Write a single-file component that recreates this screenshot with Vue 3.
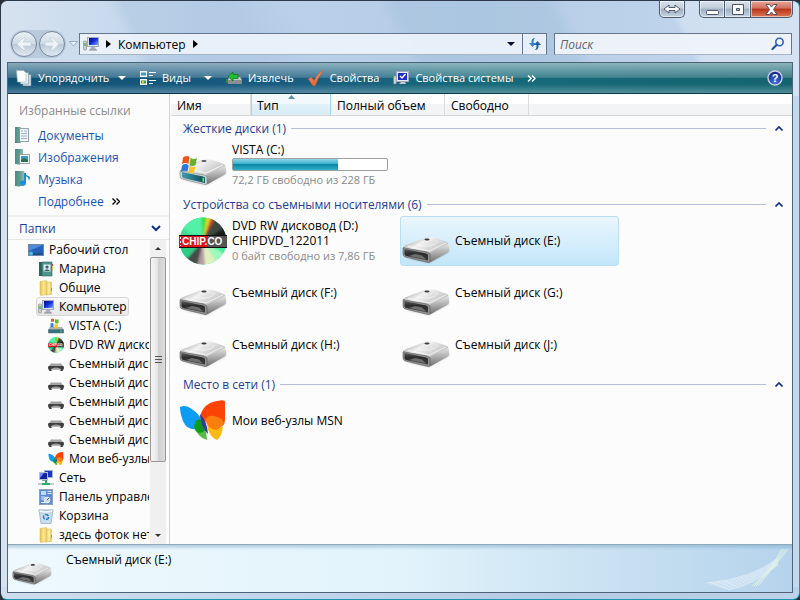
<template>
  <div class="window">
    <!-- shared icon shapes -->
    <svg class="icon-defs" aria-hidden="true">
      <defs>
        <linearGradient id="gTop" x1="0" y1="0" x2="1" y2="0.6">
          <stop offset="0" stop-color="#8a8a8a" />
          <stop offset="0.45" stop-color="#f1f1f1" />
          <stop offset="1" stop-color="#bcbcbc" />
        </linearGradient>
        <linearGradient id="gSide" x1="0" y1="0" x2="0" y2="1">
          <stop offset="0" stop-color="#e4e4e4" />
          <stop offset="1" stop-color="#707070" />
        </linearGradient>
        <linearGradient id="gCavity" x1="0" y1="0" x2="0" y2="1">
          <stop offset="0" stop-color="#5a5a5a" />
          <stop offset="0.4" stop-color="#2c2c2c" />
          <stop offset="1" stop-color="#3c3c3c" />
        </linearGradient>
        <linearGradient id="gTeal" x1="0" y1="0" x2="1" y2="0">
          <stop offset="0" stop-color="#3f9db0" />
          <stop offset="1" stop-color="#0f4a58" />
        </linearGradient>
        <linearGradient id="gScreen" x1="0" y1="0" x2="1" y2="1">
          <stop offset="0" stop-color="#000c8c" />
          <stop offset="0.5" stop-color="#1430d8" />
          <stop offset="1" stop-color="#7fa6ff" />
        </linearGradient>
        <linearGradient id="gFolder" x1="0" y1="0" x2="1" y2="0">
          <stop offset="0" stop-color="#e0bd50" />
          <stop offset="0.5" stop-color="#fbe893" />
          <stop offset="1" stop-color="#e8c95e" />
        </linearGradient>
        <linearGradient id="gGreenBook" x1="0" y1="0" x2="1" y2="0">
          <stop offset="0" stop-color="#2f6f68" />
          <stop offset="1" stop-color="#8fc0ae" />
        </linearGradient>
        <linearGradient id="gCheck" x1="0" y1="0" x2="0" y2="1">
          <stop offset="0" stop-color="#ff9a6b" />
          <stop offset="1" stop-color="#e9622c" />
        </linearGradient>
        <radialGradient id="gHelp" cx="0.5" cy="0.8" r="0.8">
          <stop offset="0" stop-color="#4a74e8" />
          <stop offset="1" stop-color="#0b1c80" />
        </radialGradient>
        <filter id="soft"><feGaussianBlur stdDeviation="1.2" /></filter>
        <clipPath id="discClip"><circle cx="24" cy="24" r="23.500" /></clipPath>
      </defs>

      <symbol id="drive" viewBox="0 1 48 48">
        <path d="M4 42l23 5 20-11v-4L26 41z" fill="#000" opacity="0.2" filter="url(#soft)" />
        <path d="M1 32Q1 30 4 29L20 23Q27 20 34 22L45 26Q47 27 46 29L27 38z" fill="url(#gTop)" />
        <path d="M27 37L46 28Q47 28 47 30V34Q47 36 45 37L29 46Q27 47 27 45z" fill="url(#gSide)" />
        <path d="M1 32Q1 31 3 32L25 36Q28 37 28 39V45Q28 47 26 46.500L3 41Q1 40 1 38z" fill="#8f8f8f" stroke="#5c5c5c" stroke-width="0.600" />
        <path d="M2.500 33L24 37.500Q26 38 26 39.500V44.500L4 40Q2.500 39 2.500 38z" fill="url(#gCavity)" />
        <path d="M7 40L13 38L20 39.500L24 43.500z" fill="#6e6e6e" />
        <path d="M6 30L27 35L44 27" fill="none" stroke="#f8f8f8" stroke-width="0.800" />
        <path d="M15 29Q30 33 36 25" fill="none" stroke="#fff" stroke-width="0.700" opacity="0.800" />
        <ellipse cx="25" cy="23.500" rx="2.600" ry="1.100" fill="#3c3c3c" />
      </symbol>

      <symbol id="systemDrive" viewBox="0 1 48 48">
        <path d="M4 40l23 5 20-11v-4L26 39z" fill="#000" opacity="0.200" filter="url(#soft)" />
        <path d="M1 31Q1 29 4 28L20 21Q27 18 34 20L45 24Q47 25 46 27L27 36z" fill="url(#gTop)" />
        <path d="M27 35L46 26Q47 26 47 28V32Q47 34 45 35L29 44Q27 45 27 43z" fill="url(#gSide)" />
        <path d="M1 31Q1 30 3 31L25 35Q28 36 28 37V43Q28 45 26 44.500L3 39Q1 38 1 36z" fill="#c9d2d4" stroke="#7d8688" stroke-width="0.600" />
        <path d="M3 32L24 36.500Q26 37 26 38V43L4 38Q3 37 3 36z" fill="url(#gTeal)" />
        <path d="M23.500 37.500l1.600.4v4l-1.600-.4z" fill="#5dff3c" />
        <path d="M12 29L27 33L44 25" fill="none" stroke="#fff" stroke-width="0.800" />
        <ellipse cx="25" cy="21" rx="2.600" ry="1" fill="#555" />
        <path d="M4 17.500q4-2.500 6.500-.5l-1 7q-3-2-6.500 0z" fill="#e85a1c" />
        <path d="M11.500 18q3.500 2 6.500 0l-1.500 7q-3 2-6 0z" fill="#6bae2c" />
        <path d="M3 25.500q3.500-2.500 6.500-.5l-1 6.500q-3-1.500-6.500.5z" fill="#2c78d8" />
        <path d="M10.500 26q3 2 6 .5l-1.500 6q-3 1.500-5.500 0z" fill="#f8c423" />
      </symbol>

      <symbol id="disc" viewBox="0 0 48 48">
        <g clip-path="url(#discClip)">
          <rect width="48" height="48" fill="#3fdc92" />
          <g filter="url(#soft)">
            <path d="M24 24L-2 8V-2h28z" fill="#52f0a8" />
            <path d="M24 24L22-2H30z" fill="#3ee040" />
            <path d="M24 24L28-2H34z" fill="#e4d02c" />
            <path d="M24 24L33-2H39z" fill="#c04a28" />
            <path d="M24 24L38-2H50V14z" fill="#3c4640" />
            <path d="M24 24L50 8V22z" fill="#151c18" />
            <path d="M24 24L50 26V44z" fill="#3df09c" />
            <path d="M24 24L50 40L36 50z" fill="#a0f8bc" />
            <path d="M24 24L40 50H24z" fill="#e0f0c0" />
            <path d="M24 24L26 50H16z" fill="#b49aa0" />
            <path d="M24 24L18 50H-2V40z" fill="#474b49" />
            <path d="M24 24L6 44L-2 30z" fill="#2ecb83" />
          </g>
        </g>
        <rect x="0" y="19" width="29" height="11" fill="#e0121c" />
        <rect x="29" y="19" width="19" height="11" fill="#555" />
        <path d="M0 18.500H48M0 30.500H48" stroke="#111" stroke-width="1" />
        <path d="M1.500 20v2M1.500 24v2M1.500 28v1" stroke="#fff" stroke-width="1" />
        <text x="3" y="28" font-family="Liberation Sans, sans-serif" font-weight="bold" font-size="10" fill="#fff">CHIP.CO</text>
      </symbol>

      <symbol id="butterfly" viewBox="0 0 48 48">
        <path d="M1 10Q7 7 14 13Q20 17 22 22L19 32Q8 34 4 24Q1 16 1 10z" fill="#0d9cf4" />
        <path d="M21 20Q24 6 38 4Q46 2 46 5V22Q46 31 38 30L25 24z" fill="#fb4306" />
        <path d="M28 28L44 30Q43 39 38 43Q30 40 28 28z" fill="#fdb913" />
        <path d="M26 23Q28 18 35 19Q44 21 45 26Q42 31 37 33Q29 32 26 23z" fill="#fb7d0e" />
        <path d="M15 29Q20 31 27 35L28 43Q18 40 15 29z" fill="#58b947" />
        <path d="M15 30Q17 20 22 23L26 34Q18 39 15 30z" fill="#0c9a1c" />
        <path d="M21 17Q28 24 29 37Q22 31 21 17z" fill="#2c3d9c" />
      </symbol>

      <symbol id="computer" viewBox="0 0 16 16">
        <rect x="0.500" y="5" width="3" height="9" rx="1" fill="#c9cfcf" stroke="#7b8787" stroke-width="0.600" />
        <path d="M2 7v3" stroke="#1fa32a" stroke-width="1" />
        <rect x="4.500" y="1.500" width="11" height="9" fill="#dfe3ea" stroke="#a3abb9" />
        <rect x="6" y="2" width="9" height="7" fill="url(#gScreen)" />
        <path d="M8 11h4l1 3H7z" fill="#a9b0ba" />
        <path d="M6 14h8" stroke="#868e99" />
      </symbol>

      <symbol id="systemProps" viewBox="0 0 16 16">
        <rect x="0.500" y="6" width="3" height="8" rx="1" fill="#c9cfcf" stroke="#7b8787" stroke-width="0.600" />
        <rect x="3.500" y="1.500" width="12" height="10" fill="#e8ebf0" stroke="#a2abba" />
        <rect x="5" y="3" width="9" height="7" fill="#1c2fc4" />
        <path d="M7 6l2 2 3.500-4" fill="none" stroke="#fff" stroke-width="1.500" />
        <path d="M8 12h4l1 2H6z" fill="#c3c8d0" />
      </symbol>

      <symbol id="desktop" viewBox="0 0 16 16">
        <rect x="0.500" y="2.500" width="15" height="11" fill="#2460b8" stroke="#6d86a8" />
        <path d="M1 3h14L1 9z" fill="#4f8cd8" />
        <rect x="1" y="11" width="14" height="2" fill="#1e4f86" />
        <circle cx="3" cy="11.500" r="2" fill="#4bb8e8" />
      </symbol>

      <symbol id="user" viewBox="0 0 16 16">
        <path d="M1 1h3v14H1z" fill="#2b6660" />
        <path d="M4 1h10v14H4z" fill="#4e9488" stroke="#2b6660" stroke-width="0.600" />
        <rect x="5.500" y="3.500" width="7" height="7" fill="#dcebf2" />
        <circle cx="9" cy="6" r="1.600" fill="#3c5a70" />
        <path d="M6 10q3-3.500 6 0z" fill="#3c5a70" />
        <path d="M14.500 3v2" stroke="#d84a34" />
        <path d="M14.500 6v3" stroke="#e4c23c" />
      </symbol>

      <symbol id="folder" viewBox="0 0 16 16">
        <path d="M7 2h6.500v12.500L7 15z" fill="#f0d36a" stroke="#d8ba5c" stroke-width="0.500" />
        <path d="M2 1.500L8 0.500Q9 1 9 2V14.500L3 15.500Q2 15 2 14z" fill="url(#gFolder)" stroke="#d8ba5c" stroke-width="0.500" />
        <path d="M9.500 3l2.500-.5v11l-2.500 1z" fill="#fbeaa0" />
        <path d="M13.500 8v3" stroke="#57a4d8" />
      </symbol>

      <symbol id="smallDrive" viewBox="0 0 16 16">
        <path d="M3.500 7h9L16 11H0z" fill="#a4a4a4" />
        <path d="M4 7h8l1 1H3z" fill="#d0d0d0" />
        <path d="M1 10h14q1 0 1 1.500T14.500 15H1.500Q0 13 0 11.500T1 10z" fill="#3f3f3f" />
        <path d="M3 13.500q1-2 5-2t5 2z" fill="#9a9a9a" />
        <path d="M3 13.500h10L12 15H4z" fill="#fafafa" />
      </symbol>

      <symbol id="smallSystem" viewBox="0 0 16 16">
        <path d="M2 9h12l2 3v3H0v-3z" fill="#a9b3b8" />
        <path d="M0.500 11.500h15V15H0.500z" fill="#2d7183" stroke="#6d7b80" stroke-width="0.600" />
        <path d="M13 12.500v1.500" stroke="#6dff48" />
        <path d="M3 1q2-1 3 0v3q-1-1-3 0z" fill="#ee5a22" />
        <path d="M7 1q2 1 3.500 0v4q-2 1-3.500 0z" fill="#6bb52c" />
        <path d="M2.500 5.500q2-1 3 0v4q-1-1-3 0z" fill="#2c7fe0" />
        <path d="M6.500 6q2 1 3.500 0v4q-2 1-3.500 0z" fill="#f8c423" />
      </symbol>

      <symbol id="network" viewBox="0 0 16 16">
        <rect x="6.500" y="0.500" width="8" height="7" fill="#1c36c8" stroke="#a9b2cc" />
        <rect x="1.500" y="2.500" width="8" height="7" fill="#1024a4" stroke="#b6bed4" />
        <path d="M2 3h4L2 8z" fill="#6d8cf0" />
        <path d="M4 10h4v1H4z" fill="#9098a8" />
        <path d="M8 10v4M0 14h16" stroke="#27b06c" stroke-width="2" />
        <path d="M0 14h4M12 14h4" stroke="#c4c9cc" stroke-width="2" />
      </symbol>

      <symbol id="control" viewBox="0 0 16 16">
        <rect x="1.500" y="0.500" width="13" height="15" fill="#5c8dd6" stroke="#8fa0b8" />
        <path d="M3 2h5v4H3z" fill="#bcd8f8" />
        <path d="M9.500 2.500h4M9.500 4.500h4M3 8h4M3 10h3" stroke="#d9ecff" />
        <circle cx="9" cy="11" r="3" fill="#cfdcea" stroke="#fff" stroke-width="0.600" />
        <path d="M9 11l2-2" stroke="#3d5f94" />
        <path d="M3 13.500h4" stroke="#eef5ff" />
      </symbol>

      <symbol id="bin" viewBox="0 0 16 16">
        <path d="M1 2h14l-2 13.500H3z" fill="#c9def0" stroke="#8ba5bc" stroke-width="0.700" />
        <path d="M1 1.500q7 2.500 14 0l-.5 3q-6 2-13 0z" fill="#eef5fb" stroke="#94abc0" stroke-width="0.500" />
        <circle cx="8" cy="9" r="2.500" fill="none" stroke="#2c7cd8" stroke-width="1.500" stroke-dasharray="4 1.200" />
      </symbol>

      <symbol id="documents" viewBox="0 0 16 18">
        <path d="M1 1h6v16H1z" fill="url(#gGreenBook)" />
        <rect x="5.500" y="2.500" width="9" height="13" fill="#f2f6f8" stroke="#98a4ac" />
        <path d="M7 5h2M10 5h3M7 7.500h6M7 10h6M7 12.500h6" stroke="#9aacc6" />
        <path d="M1 1l5 2v14l-5-1z" fill="#5b9d90" opacity="0.700" />
      </symbol>

      <symbol id="pictures" viewBox="0 0 16 18">
        <path d="M1 1h8v15H1z" fill="url(#gGreenBook)" />
        <rect x="5.500" y="6.500" width="10" height="9" fill="#f5f8fa" stroke="#98a4ac" />
        <rect x="7" y="8" width="7" height="6" fill="#3d9cc8" />
        <path d="M7 12l3-2 4 2v2H7z" fill="#2a6f50" />
        <path d="M1 1l5 2v14l-5-1z" fill="#5b9d90" opacity="0.700" />
      </symbol>

      <symbol id="music" viewBox="0 0 16 18">
        <path d="M1 1h9v15H1z" fill="url(#gGreenBook)" />
        <path d="M1 1l5 2v14l-5-1z" fill="#5b9d90" opacity="0.700" />
        <path d="M11 3v10" stroke="#0c7cc8" stroke-width="1.800" />
        <path d="M10.500 2q1 3 4 4t0 5q1-4-4-5z" fill="#1990dc" />
        <ellipse cx="9" cy="13" rx="3" ry="2.600" fill="#1d8fe0" />
      </symbol>

      <symbol id="organize" viewBox="0 0 16 16">
        <path d="M6 4.500h9V16H7z" fill="#d3dfe5" stroke="#6f8f9f" stroke-width="0.600" />
        <path d="M3.500 2.500h9V14h-8z" fill="#e8eff2" stroke="#6f8f9f" stroke-width="0.600" />
        <path d="M0.500 0.500h7l2.500 2.500v9h-8.500z" fill="#fff" stroke="#9fb3be" stroke-width="0.600" />
      </symbol>

      <symbol id="views" viewBox="0 0 16 16">
        <path d="M0 1h7v6H0zM0 9h7v6H0z" fill="#f4f8fa" />
        <path d="M1 2.500h5v3H1z" fill="#3e9cc0" />
        <path d="M1 10.500h5v3H1z" fill="#3e9a3c" />
        <path d="M2 11h2v2H2z" fill="#e0c43c" />
        <path d="M9 2.500h7M9 5.500h4M9 10.500h7M9 13.500h4" stroke="#fff" stroke-width="1" />
      </symbol>

      <symbol id="eject" viewBox="0 0 16 16">
        <path d="M3 7h11l2 3v4H2v-4z" fill="#c3c8cb" />
        <path d="M2 10h14v4H2z" fill="#878f92" />
        <path d="M0 9h2v4H0z" fill="#2a8c3c" />
        <path d="M2 6.500l5-4.500v2.500h5v4H7v2.500z" fill="#20c030" stroke="#0c7018" stroke-width="0.700" />
      </symbol>

      <symbol id="check" viewBox="0 0 16 16">
        <path d="M0.500 9l3-1.500L6 11Q9 4 15 0.500Q10 7 7 15.500H5z" fill="url(#gCheck)" stroke="#e0683a" stroke-width="0.800" />
      </symbol>
    </svg>

    <header class="chrome">
      <div class="caption">
        <button class="cap resize" aria-label="Изменить размер">
          <svg width="18" height="10" viewBox="0 0 18 10">
            <path d="M1 5l5-4v2.500h6V1l5 4-5 4V6.500H6V9z" fill="#fff" stroke="#555d68" />
          </svg>
        </button>
        <div class="cap-group">
          <button class="cap" aria-label="Свернуть">
            <svg width="13" height="11" viewBox="0 0 13 11"><rect x="0.500" y="6.500" width="12" height="4" rx="1" fill="#fff" stroke="#4c5664" /></svg>
          </button>
          <button class="cap" aria-label="Развернуть">
            <svg width="12" height="11" viewBox="0 0 12 11">
              <path d="M0.500 0.500h11v10H0.500zM4.500 4.500v2h3v-2z" fill="#fff" fill-rule="evenodd" stroke="#4c5664" />
            </svg>
          </button>
          <button class="cap close" aria-label="Закрыть">
            <svg width="13" height="11" viewBox="0 0 13 11">
              <path d="M1 0.500h3.500l2 2.500 2-2.500H12L8.500 5.500l3.500 5H8.500l-2-2.500-2 2.500H1l3.500-5z" fill="#fff" stroke="#56525e" />
            </svg>
          </button>
        </div>
      </div>

      <div class="nav-row">
        <div class="history">
          <button class="round" aria-label="Назад">
            <svg width="16" height="14" viewBox="0 0 16 14"><path d="M1 7l6-6h3L7 5h8v4H7l3 4H7z" fill="#edf3f8" stroke="#c3ced8" stroke-width="0.700" /></svg>
          </button>
          <button class="round" aria-label="Вперед">
            <svg width="16" height="14" viewBox="0 0 16 14"><path d="M15 7L9 1H6l3 4H1v4h8l-3 4h3z" fill="#edf3f8" stroke="#c3ced8" stroke-width="0.700" /></svg>
          </button>
        </div>
        <button class="plain" aria-label="Последние страницы">
          <svg width="9" height="6" viewBox="0 0 9 6"><path d="M0.500 0.500h8L4.500 5z" fill="#eaf1f8" stroke="#8a9db3" stroke-width="0.800" /></svg>
        </button>
        <nav class="address">
          <svg class="i16"><use href="#computer" /></svg>
          <svg width="5" height="8" viewBox="0 0 5 8"><path d="M0 0l5 4-5 4z" /></svg>
          <a href="#" class="crumb">Компьютер</a>
          <svg width="5" height="8" viewBox="0 0 5 8"><path d="M0 0l5 4-5 4z" /></svg>
          <button class="plain drop" aria-label="Предыдущие расположения">
            <svg width="8" height="4" viewBox="0 0 8 4"><path d="M0 0h8L4 4z" fill="#0b0b3c" /></svg>
          </button>
          <button class="plain refresh" aria-label="Обновить">
            <svg width="14" height="14" viewBox="0 0 14 14">
              <path d="M7 1Q3 1 3.500 6H1l3.500 4L8 6H5.500Q5 3 7 1z" fill="#2f86cc" />
              <path d="M7 13q4 0 3.500-5H13L9.500 4 6 8h2.500Q9 11 7 13z" fill="#1f5fa4" />
            </svg>
          </button>
        </nav>
        <label class="search">
          <input type="text" placeholder="Поиск" aria-label="Поиск" />
          <svg width="14" height="14" viewBox="0 0 14 14">
            <circle cx="8.500" cy="5" r="3.700" fill="#eef6ff" stroke="#2f62b4" stroke-width="1.600" />
            <path d="M5.500 8L1.500 12" stroke="#24519e" stroke-width="2.200" stroke-linecap="round" />
          </svg>
        </label>
      </div>
    </header>

    <div class="client">
      <div class="toolbar">
        <button v-for="tool in tools" :key="tool.label" class="tool" :class="{ menu: tool.menu }">
          <svg class="i16"><use :href="'#' + tool.icon" /></svg>
          <span>{{ tool.label }}</span>
          <svg v-if="tool.menu" width="8" height="4" viewBox="0 0 8 4"><path d="M0 0h8L4 4z" fill="#fff" /></svg>
        </button>
        <button class="tool" aria-label="Дополнительно">
          <svg width="9" height="7" viewBox="0 0 9 7"><path d="M1 0.500l3 3-3 3M5 0.500l3 3-3 3" fill="none" stroke="#fff" stroke-width="1.400" /></svg>
        </button>
        <button class="plain help" aria-label="Справка">
          <svg width="16" height="16" viewBox="0 0 16 16">
            <circle cx="8" cy="8" r="7" fill="url(#gHelp)" stroke="#c9d2e4" stroke-width="1.400" />
            <text x="8" y="12" text-anchor="middle" font-family="Liberation Sans, sans-serif" font-weight="bold" font-size="11" fill="#fff">?</text>
          </svg>
        </button>
      </div>

      <div class="body">
        <aside class="side">
          <section class="favorites">
            <h2>Избранные ссылки</h2>
            <a v-for="link in links" :key="link.label" href="#">
              <svg class="link-icon"><use :href="'#' + link.icon" /></svg>{{ link.label }}
            </a>
            <a href="#" class="more-links">
              Подробнее
              <svg width="8" height="7" viewBox="0 0 8 7"><path d="M0.500 0.500l3 3-3 3M4.500 0.500l3 3-3 3" fill="none" stroke="#000" stroke-width="1.400" /></svg>
            </a>
          </section>
          <button class="folders-head">
            Папки
            <svg width="10" height="7" viewBox="0 0 10 7"><path d="M1 1l4 4 4-4" fill="none" stroke="#0b2f8c" stroke-width="2" /></svg>
          </button>
          <div class="folders">
            <ul class="tree">
              <li v-for="(node, i) in tree" :key="i" :class="'level' + node.level">
                <button :class="{ current: node.current }">
                  <svg class="i16"><use :href="'#' + node.icon" /></svg>
                  <span>{{ node.label }}</span>
                </button>
              </li>
            </ul>
            <div class="scroll">
              <button class="plain arrow" aria-label="Вверх">
                <svg width="6" height="3" viewBox="0 0 6 3"><path d="M0 3h6L3 0z" fill="#333" /></svg>
              </button>
              <div class="track">
                <div class="thumb"><i></i><i></i><i></i></div>
              </div>
              <button class="plain arrow" aria-label="Вниз">
                <svg width="6" height="3" viewBox="0 0 6 3"><path d="M0 0h6L3 3z" fill="#333" /></svg>
              </button>
            </div>
          </div>
        </aside>

        <main class="main">
          <div class="columns">
            <button class="col w80">Имя</button>
            <button class="col w80 sorted">
              Тип
              <svg class="sort" width="7" height="4" viewBox="0 0 7 4"><path d="M0 4h7L3.500 0z" fill="#5a8fae" /></svg>
            </button>
            <button class="col w114">Полный объем</button>
            <button class="col w84">Свободно</button>
          </div>

          <section v-for="group in groups" :key="group.title" class="group">
            <button class="group-head">
              <span>{{ group.title }}</span>
              <i class="rule"></i>
              <svg width="8" height="5" viewBox="0 0 8 5"><path d="M0.500 4.500L4 1l3.500 3.500" fill="none" stroke="#0b2f8c" stroke-width="1.600" /></svg>
            </button>
            <div class="tiles">
              <button
                v-for="item in group.items"
                :key="item.name"
                class="tile"
                :class="{ selected: item.name === selected }"
                @click="selected = item.name"
              >
                <svg class="i48"><use :href="'#' + item.icon" /></svg>
                <span class="info">
                  <span>{{ item.name }}</span>
                  <span v-if="item.volume">{{ item.volume }}</span>
                  <span v-if="item.used" class="bar">
                    <span class="fill" :style="{ width: item.used + '%' }"></span>
                  </span>
                  <span v-if="item.free" class="free">{{ item.free }}</span>
                </span>
              </button>
            </div>
          </section>
        </main>
      </div>

      <footer class="details">
        <svg class="details-icon" viewBox="0 19 48 30"><use href="#drive" width="48" height="48" /></svg>
        <span>{{ selected }}</span>
        <svg class="swoosh" width="84" height="44" viewBox="0 0 84 44" fill="none">
          <g stroke="#fff" stroke-width="0.700" opacity="0.700">
            <path v-for="n in 8" :key="n" :d="`M${n * 3} ${34 + n}Q48 ${30 + n} 74 ${9 + n}`" />
          </g>
          <g stroke="#e2f6e4" stroke-width="0.800">
            <path v-for="n in 4" :key="n" :d="`M${46 + n * 2} 38Q66 24 ${76 + n * 2} 1`" />
          </g>
        </svg>
      </footer>
    </div>
  </div>
</template>

<script setup>
import { ref } from "vue";

const selected = ref("Съемный диск (E:)");

const tools = [
  { label: "Упорядочить", icon: "organize", menu: true },
  { label: "Виды", icon: "views", menu: true },
  { label: "Извлечь", icon: "eject" },
  { label: "Свойства", icon: "check" },
  { label: "Свойства системы", icon: "systemProps" },
];

const links = [
  { label: "Документы", icon: "documents" },
  { label: "Изображения", icon: "pictures" },
  { label: "Музыка", icon: "music" },
];

const tree = [
  { label: "Рабочий стол", icon: "desktop", level: 0 },
  { label: "Марина", icon: "user", level: 1 },
  { label: "Общие", icon: "folder", level: 1 },
  { label: "Компьютер", icon: "computer", level: 1, current: true },
  { label: "VISTA (C:)", icon: "smallSystem", level: 2 },
  { label: "DVD RW дисковод (D:)", icon: "disc", level: 2 },
  { label: "Съемный диск (E:)", icon: "smallDrive", level: 2 },
  { label: "Съемный диск (F:)", icon: "smallDrive", level: 2 },
  { label: "Съемный диск (G:)", icon: "smallDrive", level: 2 },
  { label: "Съемный диск (H:)", icon: "smallDrive", level: 2 },
  { label: "Съемный диск (J:)", icon: "smallDrive", level: 2 },
  { label: "Мои веб-узлы MSN", icon: "butterfly", level: 2 },
  { label: "Сеть", icon: "network", level: 1 },
  { label: "Панель управления", icon: "control", level: 1 },
  { label: "Корзина", icon: "bin", level: 1 },
  { label: "здесь фоток нет", icon: "folder", level: 1 },
];

const groups = [
  {
    title: "Жесткие диски (1)",
    items: [
      { name: "VISTA (C:)", icon: "systemDrive", used: 68, free: "72,2 ГБ свободно из 228 ГБ" },
    ],
  },
  {
    title: "Устройства со съемными носителями (6)",
    items: [
      { name: "DVD RW дисковод (D:)", icon: "disc", volume: "CHIPDVD_122011", free: "0 байт свободно из 7,86 ГБ" },
      { name: "Съемный диск (E:)", icon: "drive" },
      { name: "Съемный диск (F:)", icon: "drive" },
      { name: "Съемный диск (G:)", icon: "drive" },
      { name: "Съемный диск (H:)", icon: "drive" },
      { name: "Съемный диск (J:)", icon: "drive" },
    ],
  },
  {
    title: "Место в сети (1)",
    items: [{ name: "Мои веб-узлы MSN", icon: "butterfly" }],
  },
];
</script>

<style>
body {
  background: #2a2f38;
}
</style>

<style scoped>
.window {
  box-sizing: border-box;
  display: flex;
  flex-direction: column;
  height: 100vh;
  padding: 0 6px 6px;
  border: 1px solid #2c3a4c;
  border-right-color: #1f96b0;
  border-bottom-color: #1f96b0;
  border-radius: 7px;
  overflow: hidden;
  background:
    linear-gradient(to right, #cfdeee, #b4cbe6 70%, #bcd2ea) bottom / 100% 12px no-repeat,
    linear-gradient(63deg, transparent 0 18%, #9fbcd855 20% 33%, transparent 40% 50%, #9dbdd866 52% 70%, transparent 72% 84%, #ffffff44 85%) top / 100% 95px no-repeat,
    linear-gradient(to right, #d6e2ef, #bdd3ec 25%, #b5cce6 60%, #c4d8ee);
  font: 12px/15px "Open Sans", "Noto Sans", sans-serif;
  color: #000;
}

.icon-defs {
  position: absolute;
  width: 0;
  height: 0;
}

button,
input {
  font: inherit;
  color: inherit;
}

button {
  display: flex;
  align-items: center;
  margin: 0;
  padding: 0;
  border: 0;
  background: none;
  text-align: left;
  white-space: nowrap;
}

svg {
  flex: none;
  display: block;
}

a {
  text-decoration: none;
}

.i16 {
  width: 16px;
  height: 16px;
}

.i48 {
  width: 48px;
  height: 48px;
}

/* caption and address row */
.caption {
  display: flex;
  justify-content: flex-end;
  gap: 14px;
  height: 32px;
}

.cap-group {
  display: flex;
  height: 17px;
}

.cap {
  box-sizing: border-box;
  justify-content: center;
  width: 26px;
  height: 17px;
  border: 1px solid #4d5b6e;
  border-top: 0;
  background: linear-gradient(#dbe4ee, #c0ccd9 45%, #9fafc1 50%, #c5d3e2);
  box-shadow: inset 0 0 0 1px #ffffff88;
}

.cap.resize {
  border-radius: 0 0 5px 5px;
}

.cap-group .cap + .cap {
  border-left: 0;
}

.cap-group .cap:first-child {
  border-bottom-left-radius: 5px;
}

.cap.close {
  width: 42px;
  border-bottom-right-radius: 5px;
  background: linear-gradient(#e5a798, #d0705c 45%, #b8301a 50%, #dc7a54);
}

.nav-row {
  display: flex;
  align-items: center;
  height: 22px;
  margin: 0 1px 7px 3px;
}

.history {
  display: flex;
  margin-right: 3px;
  padding: 1px;
  gap: 2px;
  border-radius: 14px;
  background: #9fb2c877;
}

.round {
  box-sizing: border-box;
  justify-content: center;
  width: 26px;
  height: 26px;
  border: 1px solid #76879b;
  border-radius: 50%;
  background: linear-gradient(#e9f0f6, #cfdae4 50%, #bccad7 52%, #e0eaf2);
}

.address {
  flex: 1;
  display: flex;
  align-items: center;
  gap: 7px;
  box-sizing: border-box;
  height: 22px;
  margin: 0 7px 0 1px;
  padding-left: 3px;
  border: 1px solid #65758b;
  border-bottom-color: #a5b3c4;
  background: #edf2faee;
}

.crumb {
  color: #000;
}

.drop {
  margin-left: auto;
}

.refresh {
  align-self: stretch;
  justify-content: center;
  width: 24px;
  border-left: 1px solid #65758b;
}

.search {
  width: 238px;
  display: flex;
  align-items: center;
  box-sizing: border-box;
  height: 22px;
  padding: 0 6px 0 5px;
  border: 1px solid #65758b;
  border-bottom-color: #a5b3c4;
  background: #f0f4faee;
}

.search input {
  flex: 1;
  min-width: 0;
  padding: 0;
  border: 0;
  outline: 0;
  background: none;
  font-style: italic;
}

.search input::placeholder {
  color: #5c6470;
  opacity: 1;
}

/* client area */
.client {
  flex: 1;
  display: flex;
  flex-direction: column;
  min-height: 0;
  border: 1px solid #4f6478;
  background: #fcfcfc;
}

.toolbar {
  display: flex;
  align-items: center;
  height: 30px;
  padding: 0 9px 0 8px;
  border-bottom: 1px solid #0b3846;
  background:
    linear-gradient(#ffffff80, #ffffff30 48%, transparent 50%, transparent 70%, #ffffff44),
    linear-gradient(to right, #0e5276, #1a5c80 35%, #166a7a 60%, #146470);
  color: #fff;
  font-size: 11px;
  text-shadow: 1px 1px 2px #002838;
}

.tool {
  gap: 6px;
  margin-right: 14px;
}

.tool span {
  padding-bottom: 1px;
}

.menu span {
  min-width: 36px;
}

.menu:first-child span {
  min-width: 74px;
}

.help {
  margin-left: auto;
}

.body {
  flex: 1;
  display: flex;
  min-height: 0;
}

/* left pane */
.side {
  display: flex;
  flex-direction: column;
  width: 161px;
  border-right: 1px solid #c3d7e6;
}

.favorites {
  padding: 9px 0 3px 6px;
  border-bottom: 2px solid #eeeff1;
}

.favorites h2 {
  margin: 0 0 6px 5px;
  font: inherit;
  color: #8b8b8b;
}

.favorites a {
  display: flex;
  align-items: center;
  gap: 8px;
  height: 22px;
  color: #1755b5;
}

.link-icon {
  width: 16px;
  height: 18px;
}

.favorites .more-links {
  padding-left: 24px;
}

.folders-head {
  justify-content: space-between;
  height: 23px;
  padding: 0 8px 0 11px;
  border-bottom: 1px solid #e4e6ea;
  color: #1a3f9a;
}

.folders {
  flex: 1;
  display: flex;
  min-height: 0;
}

.tree {
  flex: 1;
  min-width: 0;
  margin: 0;
  padding: 0;
  overflow: hidden;
  list-style: none;
}

.tree li {
  height: 19px;
}

.tree button {
  box-sizing: border-box;
  gap: 5px;
  height: 19px;
  padding: 0 1px;
  border: 1px solid transparent;
  border-radius: 3px;
}

.tree .current {
  border-color: #d5d5d5;
  background: linear-gradient(#fafafa, #e6e6e6);
}

.level0 {
  padding-left: 18px;
}

.level1 {
  padding-left: 28px;
}

.level2 {
  padding-left: 38px;
}

.scroll {
  display: flex;
  flex-direction: column;
  width: 16px;
  margin: 0 3px 0 1px;
  background: #f0f0f0;
}

.arrow {
  justify-content: center;
  height: 17px;
}

.track {
  flex: 1;
}

.thumb {
  box-sizing: border-box;
  display: flex;
  flex-direction: column;
  align-items: center;
  justify-content: center;
  gap: 2px;
  height: 76%;
  border: 1px solid #979797;
  border-radius: 2px;
  background: linear-gradient(to right, #f6f6f6, #e6e6e6 45%, #cfcfcf 55%, #dcdcdc);
}

.thumb i {
  width: 7px;
  height: 1px;
  background: #555;
}

/* file list */
.main {
  flex: 1;
  min-width: 0;
}

.columns {
  display: flex;
  height: 22px;
  margin-left: 1px;
  border-bottom: 1px solid #d5d5d5;
  box-sizing: border-box;
  background: linear-gradient(#fff 45%, #f3f4f6 50%);
}

.col {
  position: relative;
  box-sizing: border-box;
  padding: 2px 0 0 6px;
  border-right: 1px solid #dcdddf;
}

.col.sorted {
  border-right-color: #96d9f9;
  border-left: 1px solid #96d9f9;
  padding-left: 5px;
  background: linear-gradient(#f2f9fc 45%, #e1f1f9 50%, #d8ecf6);
}

.sort {
  position: absolute;
  top: 1px;
  left: 50%;
  margin-left: -3px;
}

.w80 {
  width: 80px;
}

.w84 {
  width: 84px;
}

.w114 {
  width: 114px;
}

.group {
  padding: 0 9px 2px 7px;
}

.group-head {
  gap: 5px;
  width: 100%;
  height: 24px;
  padding-left: 6px;
  color: #1e3c96;
}

.rule {
  flex: 1;
  height: 1px;
  margin-right: 4px;
  background: #b5c0d8;
}

.tiles {
  display: grid;
  grid-template-columns: repeat(auto-fill, 219px);
  gap: 2px 4px;
}

.tile {
  box-sizing: border-box;
  gap: 5px;
  height: 50px;
  padding: 0 1px;
  border: 1px solid transparent;
  border-radius: 3px;
}

.tile.selected {
  border-color: #b8dff3;
  background: linear-gradient(#eaf6fd, #c3e6fa);
}

.info {
  display: flex;
  flex-direction: column;
  padding-bottom: 2px;
}

.bar {
  box-sizing: border-box;
  width: 156px;
  height: 13px;
  margin: 1px 0;
  border: 1px solid #a0a0a0;
  border-radius: 2px;
  background: #fff;
}

.fill {
  display: block;
  height: 11px;
  background: linear-gradient(#8ed9ea, #38aecb 45%, #0b86a4 50%, #2fb0c8);
}

.free {
  font-size: 11px;
  color: #8a8a8a;
}

/* details pane */
.details {
  display: flex;
  height: 47px;
  padding: 0 4px;
  border-top: 1px solid #8fa9bd;
  background:
    linear-gradient(#7fa8c488, transparent 5px),
    linear-gradient(to right, #eef9fe, #e2f3fb 50%, #c6dff1 80%, #b5d3ec);
}

.details span {
  margin: 7px auto 0 14px;
}

.details-icon {
  width: 40px;
  height: 25px;
  margin-top: 17px;
}

.swoosh {
  margin-top: 3px;
}
</style>
